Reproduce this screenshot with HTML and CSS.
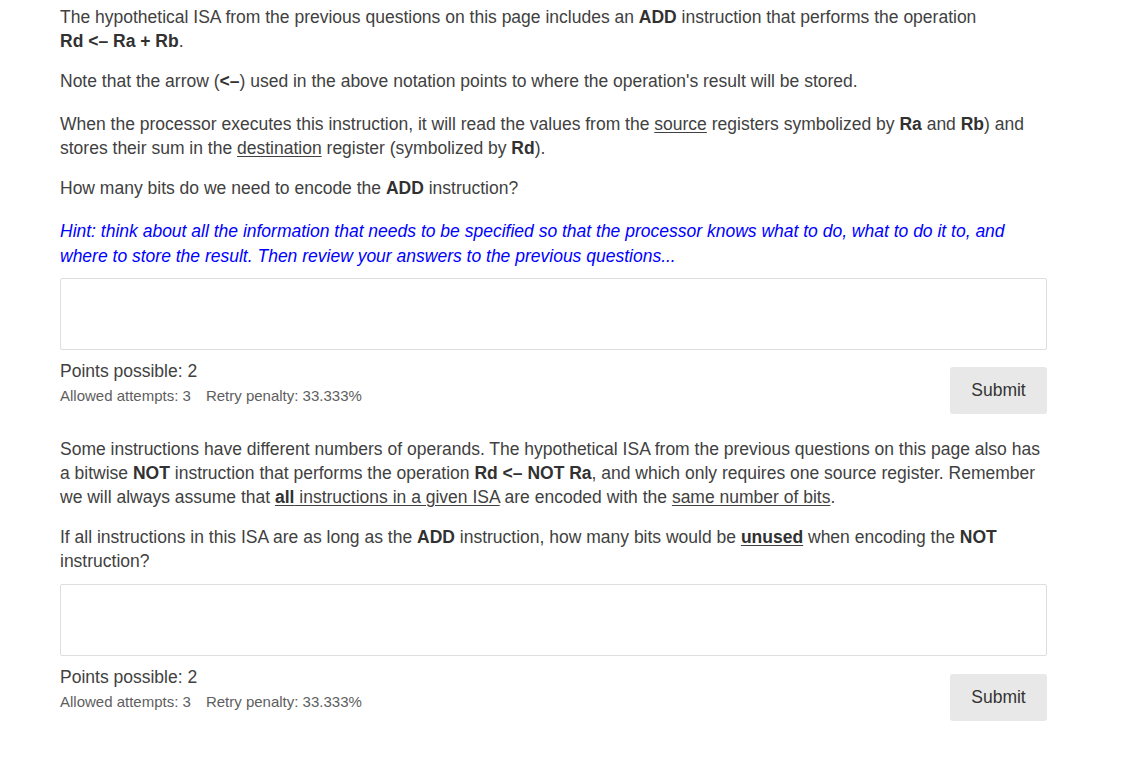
FILE: index.html
```html
<!DOCTYPE html>
<html lang="en">
<head>
<meta charset="utf-8">
<title>ISA questions</title>
<link rel="stylesheet" href="styles.css">
</head>
<body>
<main class="page">
  <section class="problem problem-first">
    <div class="prompt">
      <p class="p1">The hypothetical ISA from the previous questions on this page includes an <strong>ADD</strong> instruction that performs the operation <strong class="nowrap">Rd &lt;&#8211; Ra + Rb</strong>.</p>
      <p class="p2">Note that the arrow (<strong>&lt;&#8211;</strong>) used in the above notation points to where the operation's result will be stored.</p>
      <p class="p3">When the processor executes this instruction, it will read the values from the <u>source</u> registers symbolized by <strong>Ra</strong> and <strong>Rb</strong>) and stores their sum in the <u>destination</u> register (symbolized by <strong>Rd</strong>).</p>
      <p class="p4">How many bits do we need to encode the <strong>ADD</strong> instruction?</p>
      <p class="hint">Hint: think about all the information that needs to be specified so that the processor knows what to do, what to do it to, and where to store the result. Then review your answers to the previous questions...</p>
    </div>
    <textarea class="answer" aria-label="answer"></textarea>
    <div class="actions">
      <div class="meta">
        <div class="points">Points possible: 2</div>
        <div class="attempts"><span class="attempt-count">Allowed attempts: 3</span><span>Retry penalty: 33.333%</span></div>
      </div>
      <button class="submit" type="button">Submit</button>
    </div>
  </section>

  <section class="problem">
    <div class="prompt">
      <p>Some instructions have different numbers of operands. The hypothetical ISA from the previous questions on this page also has a bitwise <strong>NOT</strong> instruction that performs the operation <strong>Rd &lt;&#8211; NOT Ra</strong>, and which only requires one source register. Remember we will always assume that <u><strong>all</strong> instructions in a given ISA</u> are encoded with the <u>same number of bits</u>.</p>
      <p class="p-next">If all instructions in this ISA are as long as the <strong>ADD</strong> instruction, how many bits would be <u><strong>unused</strong></u> when encoding the <strong>NOT</strong> instruction?</p>
    </div>
    <textarea class="answer answer-second" aria-label="answer"></textarea>
    <div class="actions">
      <div class="meta">
        <div class="points">Points possible: 2</div>
        <div class="attempts"><span class="attempt-count">Allowed attempts: 3</span><span>Retry penalty: 33.333%</span></div>
      </div>
      <button class="submit submit-second" type="button">Submit</button>
    </div>
  </section>
</main>
</body>
</html>
```

FILE: styles.css
```css
html, body {
  margin: 0;
  padding: 0;
  background: #ffffff;
}

body {
  font-family: "Liberation Sans", Arial, sans-serif;
  font-size: 17.5px;
  line-height: 24px;
  color: #414141;
}

.page {
  width: 987px;
  padding: 5px 0 0 60px;
}

p {
  margin: 0;
}

strong {
  font-weight: bold;
  color: #313131;
}

u {
  text-decoration: underline;
  text-underline-offset: 2px;
}

.nowrap {
  white-space: nowrap;
}

.problem-first {
  margin-bottom: 23px;
}

.p2 {
  margin-top: 16px;
}

.p3 {
  margin-top: 19px;
}

.p4 {
  margin-top: 16px;
}

.hint {
  margin-top: 19px;
  color: #0000ff;
  font-style: italic;
  line-height: 24.5px;
}

.p-next {
  margin-top: 16px;
}

.answer {
  display: block;
  box-sizing: border-box;
  width: 987px;
  height: 72px;
  margin: 10px 0 0 0;
  padding: 8px;
  border: 1px solid #dedede;
  border-radius: 2px;
  background: #ffffff;
  resize: none;
  font: inherit;
}

.answer-second {
  margin-top: 11px;
}

.actions {
  display: flex;
  justify-content: space-between;
  align-items: flex-start;
  margin-top: 9px;
}

.meta {
  display: flex;
  flex-direction: column;
}

.points {
  font-size: 17.5px;
  line-height: 24px;
  color: #414141;
}

.attempts {
  display: flex;
  gap: 15px;
  margin-top: 2px;
  font-size: 15px;
  line-height: 22px;
  color: #5e5e5e;
}

.submit {
  margin-top: 8px;
  width: 97px;
  height: 47px;
  border: none;
  border-radius: 3px;
  background: #e8e8e8;
  color: #333333;
  font-family: "Liberation Sans", Arial, sans-serif;
  font-size: 17.5px;
  padding: 0;
}

.submit-second {
  margin-top: 9px;
}
```
